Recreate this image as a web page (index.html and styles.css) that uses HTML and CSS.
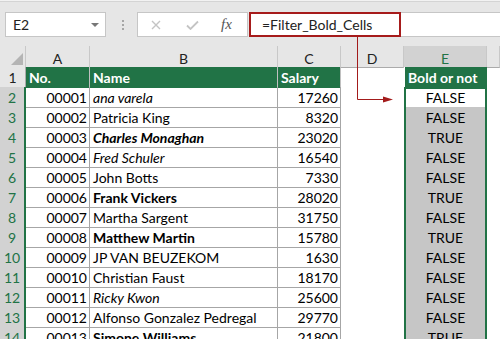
FILE: index.html
```html
<!DOCTYPE html>
<html>
<head>
  <title>Filter Bold Cells</title>
  <link rel="stylesheet" href="styles.css">
</head>
<body>
  <div class="sheet">
    <div class="toolbar">
      <div class="namebox"><span>E2</span><span class="caret"></span></div>
      <div class="grip"><span></span><span></span><span></span></div>
      <div class="fxbox">
        <svg class="icon-x" width="10" height="10" viewBox="0 0 10 10"><path d="M1 1L9 9M9 1L1 9" stroke="#c4c4c4" stroke-width="1.4" fill="none"/></svg>
        <svg class="icon-ok" width="13" height="10" viewBox="0 0 13 10"><path d="M1 5.5L4.5 9L12 1.5" stroke="#c4c4c4" stroke-width="1.8" fill="none"/></svg>
        <span class="fx">fx</span>
      </div>
      <div class="formula">
        <div class="fbox">=Filter_Bold_Cells</div>
        <div class="fline"></div>
      </div>
    </div>

    <div class="grid">
      <div class="row colhdr">
        <div class="corner"><span></span></div>
        <div>A</div><div>B</div><div>C</div><div>D</div><div class="on">E</div><div></div>
      </div>
      <div class="row">
        <div class="rh">1</div>
        <div class="cell head">No.</div>
        <div class="cell head">Name</div>
        <div class="cell head">Salary</div>
        <div class="d"></div>
        <div class="cell head ehead">Bold or not</div>
        <div></div>
      </div>
      <div class="row">
        <div class="rh sel">2</div>
        <div class="cell num">00001</div><div class="cell i">ana varela</div><div class="cell num">17260</div>
        <div class="d"></div><div class="cell e active">FALSE</div><div></div>
      </div>
      <div class="row">
        <div class="rh sel">3</div>
        <div class="cell num">00002</div><div class="cell">Patricia King</div><div class="cell num">8320</div>
        <div class="d"></div><div class="cell e">FALSE</div><div></div>
      </div>
      <div class="row">
        <div class="rh sel">4</div>
        <div class="cell num">00003</div><div class="cell b i">Charles Monaghan</div><div class="cell num">23020</div>
        <div class="d"></div><div class="cell e">TRUE</div><div></div>
      </div>
      <div class="row">
        <div class="rh sel">5</div>
        <div class="cell num">00004</div><div class="cell i">Fred Schuler</div><div class="cell num">16540</div>
        <div class="d"></div><div class="cell e">FALSE</div><div></div>
      </div>
      <div class="row">
        <div class="rh sel">6</div>
        <div class="cell num">00005</div><div class="cell">John Botts</div><div class="cell num">7330</div>
        <div class="d"></div><div class="cell e">FALSE</div><div></div>
      </div>
      <div class="row">
        <div class="rh sel">7</div>
        <div class="cell num">00006</div><div class="cell b">Frank Vickers</div><div class="cell num">28020</div>
        <div class="d"></div><div class="cell e">TRUE</div><div></div>
      </div>
      <div class="row">
        <div class="rh sel">8</div>
        <div class="cell num">00007</div><div class="cell">Martha Sargent</div><div class="cell num">31750</div>
        <div class="d"></div><div class="cell e">FALSE</div><div></div>
      </div>
      <div class="row">
        <div class="rh sel">9</div>
        <div class="cell num">00008</div><div class="cell b">Matthew Martin</div><div class="cell num">15780</div>
        <div class="d"></div><div class="cell e">TRUE</div><div></div>
      </div>
      <div class="row">
        <div class="rh sel">10</div>
        <div class="cell num">00009</div><div class="cell">JP VAN BEUZEKOM</div><div class="cell num">1630</div>
        <div class="d"></div><div class="cell e">FALSE</div><div></div>
      </div>
      <div class="row">
        <div class="rh sel">11</div>
        <div class="cell num">00010</div><div class="cell">Christian Faust</div><div class="cell num">18170</div>
        <div class="d"></div><div class="cell e">FALSE</div><div></div>
      </div>
      <div class="row">
        <div class="rh sel">12</div>
        <div class="cell num">00011</div><div class="cell i">Ricky Kwon</div><div class="cell num">25600</div>
        <div class="d"></div><div class="cell e">FALSE</div><div></div>
      </div>
      <div class="row">
        <div class="rh sel">13</div>
        <div class="cell num">00012</div><div class="cell">Alfonso Gonzalez Pedregal</div><div class="cell num">29770</div>
        <div class="d"></div><div class="cell e">FALSE</div><div></div>
      </div>
      <div class="row">
        <div class="rh sel">14</div>
        <div class="cell num">00013</div><div class="cell b">Simone Williams</div><div class="cell num">21800</div>
        <div class="d"></div><div class="cell e">TRUE</div><div></div>
      </div>
    </div>

    <!-- callout from the formula to the result column -->
    <svg class="arrow" width="500" height="339" viewBox="0 0 500 339">
      <path d="M357.5 37V99.5H385" stroke="#a31b1b" stroke-width="1" fill="none"/>
      <path d="M383 96.5L393 99.5L383 102.5Z" fill="#a31b1b"/>
    </svg>
  </div>
</body>
</html>
```

FILE: styles.css
```css
* {
  box-sizing: border-box;
  margin: 0;
  padding: 0;
}

body {
  font-family: Lato, "Liberation Sans", sans-serif;
  font-size: 14px;
  color: #000;
  background-color: #fff;
}

.sheet {
  position: relative;
  width: 500px;
  height: 339px;
  overflow: hidden;
  background-color: #fff;
}

/* formula bar */
.toolbar {
  display: flex;
  align-items: flex-start;
  height: 46px;
  padding-top: 12px;
  background: linear-gradient(#f2f2f2 0, #f2f2f2 1px, #d4d4d4 1px, #d4d4d4 2px, #e6e6e6 2px);
}

.namebox {
  display: flex;
  align-items: center;
  justify-content: space-between;
  width: 101px;
  height: 25px;
  margin-left: 5px;
  padding: 0 6px 0 7px;
  background-color: #fff;
  border: 1px solid #c6c6c6;
  line-height: 23px;
  color: #222;
}

.caret {
  width: 0;
  height: 0;
  border-left: 4px solid transparent;
  border-right: 4px solid transparent;
  border-top: 4px solid #777;
}

.grip {
  display: flex;
  flex-direction: column;
  gap: 2px;
  margin: 8px 13px 0 16px;
}

.grip span {
  width: 2px;
  height: 2px;
  background-color: #a6a6a6;
}

.fxbox {
  display: flex;
  align-items: center;
  width: 111px;
  height: 25px;
  background-color: #fff;
  border: 1px solid #c6c6c6;
}

.icon-x {
  margin-left: 13px;
}

.icon-ok {
  margin-left: 25px;
}

.fx {
  margin-left: 22px;
  font-family: "Liberation Serif", serif;
  font-style: italic;
  font-size: 15px;
  color: #555;
}

.formula {
  display: flex;
  flex: 1;
  margin-left: 1px;
}

.fbox {
  width: 152px;
  height: 25px;
  padding-left: 11px;
  background-color: #fff;
  border: 2px solid #a61b1b;
  line-height: 21px;
  color: #222;
}

.fline {
  flex: 1;
  height: 25px;
  background-color: #fff;
  border-top: 1px solid #c6c6c6;
  border-bottom: 1px solid #c6c6c6;
}

/* sheet grid */
.row {
  display: grid;
  grid-template-columns: 26px 64px 188px 63px 63px 83px 13px;
  height: 20px;
}

.colhdr {
  height: 21px;
}

.colhdr div {
  background-color: #e6e6e6;
  border-right: 1px solid #c8c8c8;
  border-bottom: 1px solid #ababab;
  text-align: center;
  padding-top: 4px;
  line-height: 17px;
  color: #222;
}

.colhdr .on {
  background-color: #d2d2d2;
  color: #217346;
}

.colhdr .corner {
  display: flex;
  align-items: flex-end;
  justify-content: flex-end;
  padding: 0 2px 2px 0;
}

.corner span {
  width: 12px;
  height: 12px;
  background-color: #b4b4b4;
  clip-path: polygon(100% 0, 100% 100%, 0 100%);
}

.rh {
  background-color: #e6e6e6;
  border-right: 1px solid #ababab;
  border-bottom: 1px solid #c8c8c8;
  text-align: center;
  padding-top: 1px;
  line-height: 19px;
  color: #222;
}

.rh.sel {
  background-color: #d2d2d2;
  border-right: 2px solid #217346;
  color: #217346;
}

.cell {
  padding: 1px 3px 0;
  line-height: 19px;
  white-space: nowrap;
  overflow: hidden;
  border-right: 1px solid #a6a6a6;
  border-bottom: 1px solid #a6a6a6;
}

.num {
  text-align: right;
  padding-right: 2px;
}

.i {
  font-style: italic;
}

.b {
  font-weight: 700;
}

.head {
  background-color: #217346;
  color: #fff;
  font-weight: 700;
  border-right-color: #c0c0c0;
  border-bottom-color: #217346;
}

.ehead {
  border-left: 1px solid #fff;
  border-right: none;
  border-bottom: 1px solid #fff;
}

.e {
  text-align: center;
  padding: 1px 0 0;
  background-color: #c6c6c6;
  border-left: 2px solid #217346;
  border-right: 2px solid #217346;
  border-bottom: 1px solid #8f8f8f;
}

.e.active {
  background-color: #fff;
  border-top: 2px solid #217346;
  padding-top: 0;
  line-height: 18px;
}

.arrow {
  position: absolute;
  left: 0;
  top: 0;
  pointer-events: none;
}
```
